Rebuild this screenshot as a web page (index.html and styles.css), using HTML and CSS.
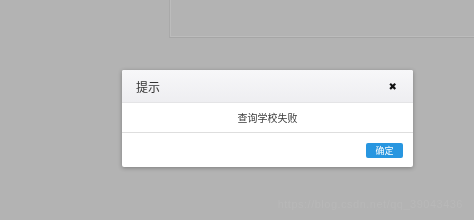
FILE: index.html
```html
<!DOCTYPE html>
<html lang="zh-CN">
<head>
    <meta charset="UTF-8">
    <meta name="viewport" content="width=device-width, initial-scale=1.0">
    <title>提示</title>
    <link rel="stylesheet" href="styles.css">
</head>
<body>

    <div class="page-panel"></div>

    <div class="modal-backdrop">
        <div class="modal">
            <div class="modal-header">
                <span class="modal-title">提示</span>
                <span class="modal-close">&#x2716;</span>
            </div>
            <div class="modal-body">查询学校失败</div>
            <div class="modal-footer">
                <button class="ok-button">确定</button>
            </div>
        </div>
    </div>

    <div class="watermark">https://blog.csdn.net/qq_39043436</div>

</body>
</html>
```

FILE: styles.css
```css
body {
    margin: 0;
    width: 474px;
    height: 220px;
    overflow: hidden;
    background-color: #b3b3b3;
    font-family: "Noto Sans CJK SC", "Noto Sans", sans-serif;
}

.page-panel {
    margin-left: 169px;
    height: 37px;
    border-left: 1px solid #a9a9a9;
    border-bottom: 1px solid #a6a6a6;
    box-shadow: inset 1px -1px 0 #bcbcbc;
}

.modal-backdrop {
    position: fixed;
    top: 0;
    left: 0;
    width: 100%;
    height: 100%;
    padding: 70px 0 0 122px;
    box-sizing: border-box;
}

.modal {
    width: 291px;
    background-color: white;
    border-radius: 2px;
    box-shadow: 0 1px 4px rgba(0, 0, 0, 0.3);
    overflow: hidden;
}

.modal-header {
    height: 32px;
    display: flex;
    align-items: center;
    justify-content: space-between;
    padding: 0 16px 0 14px;
    background: linear-gradient(#f7f7f9, #eeeef1);
    border-bottom: 1px solid #e4e4e6;
}

.modal-title {
    font-size: 12px;
    color: #333;
}

.modal-close {
    font-size: 10px;
    color: #111;
    font-family: "DejaVu Sans", sans-serif;
}

.modal-body {
    height: 29px;
    display: flex;
    align-items: center;
    justify-content: center;
    font-size: 10px;
    color: #3a3a3a;
    border-bottom: 1px solid #dedede;
}

.modal-footer {
    height: 34px;
    display: flex;
    align-items: center;
    justify-content: flex-end;
    padding-right: 10px;
}

.ok-button {
    width: 37px;
    height: 15px;
    padding: 0;
    border: none;
    border-radius: 2px;
    background-color: #2896e0;
    color: white;
    font-family: "Noto Sans CJK SC", sans-serif;
    font-size: 9px;
    line-height: 15px;
}

.watermark {
    position: fixed;
    right: 11px;
    top: 198px;
    font-family: "Liberation Sans", sans-serif;
    font-size: 11px;
    letter-spacing: 0.5px;
    color: rgba(255, 255, 255, 0.07);
}
```
